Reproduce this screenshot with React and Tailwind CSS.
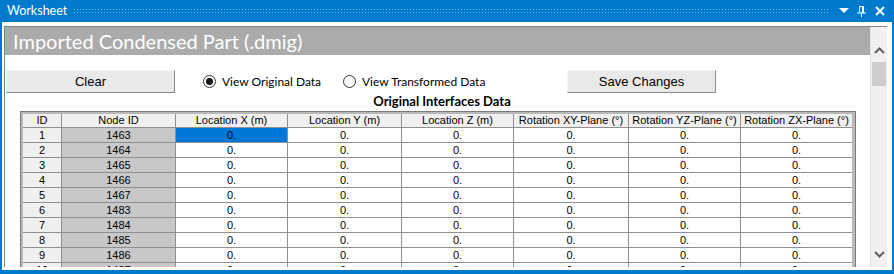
import React from "react";

const nodes = [1463, 1464, 1465, 1466, 1467, 1483, 1484, 1485, 1486, 1487, 1488, 1489];
const headers = [
  "ID",
  "Node ID",
  "Location X (m)",
  "Location Y (m)",
  "Location Z (m)",
  "Rotation XY-Plane (°)",
  "Rotation YZ-Plane (°)",
  "Rotation ZX-Plane (°)",
];

const Radio = ({ checked, label, className }) => (
  <div className={`flex items-center ${className}`}>
    <div className="w-[13px] h-[13px] rounded-full border border-[#333] bg-white flex items-center justify-center">
      {checked && <div className="w-[7px] h-[7px] rounded-full bg-[#1a1a1a]" />}
    </div>
    <span className="ml-[6px] text-[12px] text-black">{label}</span>
  </div>
);

const WinButton = ({ children, className }) => (
  <div
    className={`h-[23px] flex items-center justify-center bg-[#e9e9e9] border border-t-[#f5f5f5] border-l-[#f5f5f5] border-r-[#8a8a8a] border-b-[#8a8a8a] text-[13px] text-black font-['Liberation_Sans',sans-serif] ${className}`}
  >
    {children}
  </div>
);

export default function App() {
  return (
    <div className="w-[894px] h-[274px] bg-[#007acc] flex flex-col px-[2px] pb-[4px] overflow-hidden font-['Lato','Noto_Sans',sans-serif]">
      {/* title bar */}
      <div className="h-[22px] shrink-0 flex items-center pl-[5px] pr-[7px] text-white text-[12.5px]">
        <span>Worksheet</span>
        <div className="flex-1 ml-[6px] mr-[10px] h-[6px] [background-image:radial-gradient(rgba(255,255,255,0.45)_35%,transparent_40%)] [background-size:3px_3px]" />
        <svg width="10" height="6" viewBox="0 0 10 6" className="mr-[8px]">
          <path d="M0 0H10L5 5Z" fill="white" />
        </svg>
        <svg width="9" height="11" viewBox="0 0 9 11" className="mr-[9px]">
          <path d="M2.5 0.5V6.5M6.5 0.5V6.5M2.5 0.5H6.5M0 7H9M4.5 7V11" stroke="white" strokeWidth="1" fill="none" />
          <rect x="5" y="0.5" width="2" height="6.5" fill="white" />
        </svg>
        <svg width="10" height="10" viewBox="0 0 10 10">
          <path d="M1 1L9 9M9 1L1 9" stroke="white" strokeWidth="2" />
        </svg>
      </div>

      {/* body */}
      <div className="flex-1 min-h-0 bg-white pt-[4px] pl-[2px] pr-[5px] pb-[3px] flex">
        <div className="flex-1 min-w-0 flex border-t border-l border-[#828282]">
          <div className="flex-1 min-w-0 flex flex-col overflow-hidden">
            <div className="h-[28px] shrink-0 bg-[#ababab] flex items-center pl-[8px] text-white text-[20px] leading-none">
              Imported Condensed Part (.dmig)
            </div>

            <div className="mt-[15px] flex items-center shrink-0">
              <WinButton className="ml-[1px] w-[169px]">Clear</WinButton>
              <Radio checked label="View Original Data" className="ml-[28px] w-[140px]" />
              <Radio label="View Transformed Data" className="w-[224px]" />
              <WinButton className="w-[149px]">Save Changes</WinButton>
            </div>

            <div className="h-[18px] shrink-0 ml-[15px] w-[836px] pl-[8px] flex items-center justify-center text-[13px] font-bold text-black">
              Original Interfaces Data
            </div>

            <div className="ml-[15px] w-[836px] shrink-0 border-l border-t border-r border-[#7a7a7a]">
              <div className="border-l-2 border-t-2 border-r-[3px] border-[#b9b9b9]">
                <div className="grid grid-cols-[38px_113px_111px_113px_111px_114px_111px_111px] gap-px bg-[#8f8f8f] font-['Liberation_Sans',sans-serif] text-[11px] text-black leading-none">
                  {headers.map((h) => (
                    <div key={h} className="h-[13px] bg-[#f0f0f0] flex items-center justify-center whitespace-nowrap">
                      {h}
                    </div>
                  ))}
                  {nodes.map((n, i) => (
                    <React.Fragment key={n}>
                      <div className="h-[14px] bg-[#f0f0f0] flex items-center justify-center">{i + 1}</div>
                      <div className="h-[14px] bg-[#c8c8c8] flex items-center justify-center">{n}</div>
                      {[0, 1, 2, 3, 4, 5].map((c) => (
                        <div
                          key={c}
                          className={`h-[14px] flex items-center justify-center ${
                            i === 0 && c === 0 ? "bg-[#0078d7]" : "bg-white"
                          }`}
                        >
                          0.
                        </div>
                      ))}
                    </React.Fragment>
                  ))}
                </div>
              </div>
            </div>
          </div>

          {/* scrollbar */}
          <div className="w-[17px] shrink-0 bg-[#f0f0f0] border-l border-[#e2e2e2] flex flex-col items-center pt-[20px] pb-[9px]">
            <svg width="11" height="7" viewBox="0 0 11 7">
              <path d="M1 6L5.5 1.5L10 6" stroke="#606060" strokeWidth="2" fill="none" />
            </svg>
            <div className="mt-[8px] w-[14px] h-[24px] bg-[#cdcdcd]" />
            <div className="flex-1" />
            <svg width="11" height="7" viewBox="0 0 11 7">
              <path d="M1 1L5.5 5.5L10 1" stroke="#606060" strokeWidth="2" fill="none" />
            </svg>
          </div>
        </div>
      </div>
    </div>
  );
}
